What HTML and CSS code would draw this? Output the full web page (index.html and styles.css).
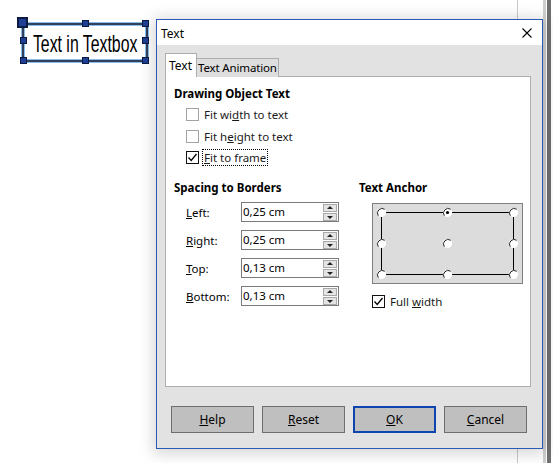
FILE: index.html
```html
<!DOCTYPE html>
<html>
<head>
<meta charset="utf-8">
<title>Text</title>
<link rel="stylesheet" href="styles.css">
</head>
<body>
<div class="desk">
  <div class="guide guide-a"></div>
  <div class="guide guide-b"></div>
  <div class="guide guide-c"></div>

  <div class="textbox">
    <div class="frame"><span class="tb-text">Text in Textbox</span></div>
    <span class="h h-big h-tl"></span>
    <span class="h h-tm"></span>
    <span class="h h-tr"></span>
    <span class="h h-ml"></span>
    <span class="h h-mr"></span>
    <span class="h h-bl"></span>
    <span class="h h-bm"></span>
    <span class="h h-br"></span>
  </div>

  <div class="dialog">
    <div class="titlebar">
      <span class="title">Text</span>
      <svg class="close" width="10" height="10" viewBox="0 0 10 10"><path d="M0.5 0.5 L9.5 9.5 M9.5 0.5 L0.5 9.5" stroke="#000" stroke-width="1.1" fill="none"/></svg>
    </div>
    <div class="dlg-body">
      <div class="tabs">
        <div class="tab tab-active">Text</div>
        <div class="tab">Text Animation</div>
      </div>
      <div class="panel">
        <div class="section">
          <div class="heading">Drawing Object Text</div>
          <div class="check">
            <span class="box box-off"></span>
            <span class="lbl-text">Fit wi<u>d</u>th to text</span>
          </div>
          <div class="check">
            <span class="box box-off"></span>
            <span class="lbl-text">Fit h<u>e</u>ight to text</span>
          </div>
          <div class="check">
            <span class="box box-on"><svg width="11" height="11" viewBox="0 0 11 11"><path d="M1.5 5.5 L4.2 8.5 L9.5 2" stroke="#000" stroke-width="1.3" fill="none"/></svg></span>
            <span class="lbl-text focus"><u>F</u>it to frame</span>
          </div>
        </div>

        <div class="cols">
          <div class="col-left">
            <div class="heading heading-2">Spacing to Borders</div>
            <div class="spin-row">
              <span class="lbl"><u>L</u>eft:</span>
              <div class="field"><span class="val">0,25 cm</span><span class="spin"><span class="sb sb-up"></span><span class="sb sb-down"></span></span></div>
            </div>
            <div class="spin-row">
              <span class="lbl"><u>R</u>ight:</span>
              <div class="field"><span class="val">0,25 cm</span><span class="spin"><span class="sb sb-up"></span><span class="sb sb-down"></span></span></div>
            </div>
            <div class="spin-row">
              <span class="lbl"><u>T</u>op:</span>
              <div class="field"><span class="val">0,13 cm</span><span class="spin"><span class="sb sb-up"></span><span class="sb sb-down"></span></span></div>
            </div>
            <div class="spin-row">
              <span class="lbl"><u>B</u>ottom:</span>
              <div class="field"><span class="val">0,13 cm</span><span class="spin"><span class="sb sb-up"></span><span class="sb sb-down"></span></span></div>
            </div>
          </div>

          <div class="col-right">
            <div class="heading heading-2">Text Anchor</div>
            <svg class="anchor" width="151" height="81" viewBox="0 0 151 81">
              <rect x="0.5" y="0.5" width="150" height="80" fill="#dcdcdc" stroke="#7f7f7f"/>
              <rect x="9.5" y="9.5" width="132" height="62" fill="none" stroke="#000"/>
              <g>
                <circle cx="9.5" cy="9.5" r="4.6" fill="#fff"/>
                <circle cx="75.5" cy="9.5" r="4.6" fill="#fff"/>
                <circle cx="141.5" cy="9.5" r="4.6" fill="#fff"/>
                <circle cx="9.5" cy="40.5" r="4.6" fill="#fff"/>
                <circle cx="75.5" cy="40.5" r="4.6" fill="#fff"/>
                <circle cx="141.5" cy="40.5" r="4.6" fill="#fff"/>
                <circle cx="9.5" cy="71.5" r="4.6" fill="#fff"/>
                <circle cx="75.5" cy="71.5" r="4.6" fill="#fff"/>
                <circle cx="141.5" cy="71.5" r="4.6" fill="#fff"/>
              </g>
              <g fill="none" stroke="#222" stroke-width="1">
                <path d="M6.3 12.7 A4.6 4.6 0 0 1 12.7 6.3"/>
                <path d="M72.3 12.7 A4.6 4.6 0 0 1 78.7 6.3"/>
                <path d="M138.3 12.7 A4.6 4.6 0 0 1 144.7 6.3"/>
                <path d="M6.3 43.7 A4.6 4.6 0 0 1 12.7 37.3"/>
                <path d="M72.3 43.7 A4.6 4.6 0 0 1 78.7 37.3"/>
                <path d="M138.3 43.7 A4.6 4.6 0 0 1 144.7 37.3"/>
                <path d="M6.3 74.7 A4.6 4.6 0 0 1 12.7 68.3"/>
                <path d="M72.3 74.7 A4.6 4.6 0 0 1 78.7 68.3"/>
                <path d="M138.3 74.7 A4.6 4.6 0 0 1 144.7 68.3"/>
              </g>
              <circle cx="75.5" cy="9.5" r="1.6" fill="#000"/>
            </svg>
            <div class="check check-full">
              <span class="box box-on"><svg width="11" height="11" viewBox="0 0 11 11"><path d="M1.5 5.5 L4.2 8.5 L9.5 2" stroke="#000" stroke-width="1.3" fill="none"/></svg></span>
              <span class="lbl-text">Full <u>w</u>idth</span>
            </div>
          </div>
        </div>
      </div>

      <div class="buttons">
        <div class="btn"><u>H</u>elp</div>
        <div class="btn"><u>R</u>eset</div>
        <div class="btn btn-default"><u>O</u>K</div>
        <div class="btn"><u>C</u>ancel</div>
      </div>
    </div>
  </div>
</div>
</body>
</html>
```

FILE: styles.css
```css
html, body {
  margin: 0;
  padding: 0;
}

body {
  width: 553px;
  height: 463px;
  overflow: hidden;
  background: #ffffff;
  font-family: "Noto Sans", "Open Sans", sans-serif;
  font-size: 11.5px;
  color: #000;
}

.desk {
  position: relative;
  width: 553px;
  height: 463px;
  overflow: hidden;
}

/* canvas guide lines */
.guide {
  position: absolute;
  top: 0;
  height: 463px;
}
.guide-a { left: 517px; width: 1px; background: #c9c9c9; }
.guide-b { left: 543px; width: 3px; background: #cfcfcf; }
.guide-c { left: 547px; width: 4px; background: #707070; }

/* text box drawing object on the canvas */
.textbox {
  position: absolute;
  left: 22px;
  top: 23px;
  width: 126px;
  height: 39px;
}
.frame {
  box-sizing: border-box;
  width: 100%;
  height: 100%;
  border: 2px solid #33405c;
  box-shadow: 0 0 0 1px #86c0ea, inset 0 0 0 1px #86c0ea;
  background: #fff;
  display: flex;
  align-items: center;
  justify-content: center;
  overflow: hidden;
}
.tb-text {
  font-family: "Liberation Sans", Arial, sans-serif;
  font-size: 24px;
  line-height: 24px;
  white-space: nowrap;
  transform: scaleX(0.66);
  margin-top: 2px;
}
.h {
  position: absolute;
  box-sizing: border-box;
  width: 7px;
  height: 7px;
  background: #1f3f95;
  border: 1px solid #0b1a40;
}
.h-big { width: 11px; height: 11px; left: -5px; top: -6px; border-width: 2px; border-color: #0b1a40; }
.h-tm { left: 60px; top: -3px; }
.h-tr { left: 120px; top: -3px; }
.h-ml { left: -2px; top: 14px; }
.h-mr { left: 120px; top: 14px; }
.h-bl { left: -2px; top: 34px; }
.h-bm { left: 60px; top: 34px; }
.h-br { left: 120px; top: 34px; }

/* dialog window */
.dialog {
  position: absolute;
  left: 156px;
  top: 19px;
  width: 387px;
  height: 430px;
  box-sizing: border-box;
  border: 1px solid #2a5ab4;
  background: #e2e2e2;
  box-shadow: 0 2px 14px 3px rgba(0, 0, 0, 0.16);
  display: flex;
  flex-direction: column;
}

.titlebar {
  height: 25px;
  background: #ffffff;
  display: flex;
  align-items: center;
  justify-content: space-between;
  padding: 0 10px 0 4px;
  flex: none;
}
.title {
  font-size: 12px;
  margin-top: 1px;
}
.close { display: block; margin-top: 1px; }

.dlg-body {
  flex: 1;
  padding: 8px 0 0 8px;
  display: flex;
  flex-direction: column;
}

.tabs {
  display: flex;
  align-items: flex-end;
  height: 24px;
  position: relative;
  z-index: 2;
  margin-bottom: -1px;
}
.tab {
  box-sizing: border-box;
  height: 19px;
  border: 1px solid #adadad;
  border-bottom: none;
  background: #dedede;
  padding: 0 1px 0 1px;
  line-height: 18px;
  white-space: nowrap;
  letter-spacing: -0.15px;
}
.tab + .tab { margin-left: -1px; }
.tab-active {
  height: 24px;
  background: #ffffff;
  padding: 0 4px 0 3px;
  line-height: 24px;
  font-size: 12px;
  letter-spacing: 0;
  position: relative;
  z-index: 2;
}

.panel {
  box-sizing: border-box;
  width: 366px;
  height: 311px;
  background: #ffffff;
  border: 1px solid #adadad;
  padding: 9px 0 0 8px;
  flex: none;
}

.heading {
  font-weight: bold;
  height: 16px;
  line-height: 16px;
  white-space: nowrap;
}

.section .heading { margin-bottom: 2px; }

.check {
  display: flex;
  align-items: center;
  height: 21.5px;
  padding-left: 12px;
  white-space: nowrap;
}
.box {
  box-sizing: border-box;
  width: 13px;
  height: 13px;
  background: #fff;
  border: 1px solid #a3a3a3;
  display: flex;
  align-items: center;
  justify-content: center;
  margin-right: 5px;
  flex: none;
}
.box-on { border-color: #111; }
.box svg { display: block; }
.lbl-text { color: #1a1a1a; line-height: 15px; }
.focus {
  outline: 1px dotted #000;
  outline-offset: 0px;
  padding: 0 1px;
  margin-left: -1px;
}

.cols {
  display: grid;
  grid-template-columns: 185px 1fr;
  margin-top: 11px;
}

.spin-row {
  display: flex;
  align-items: center;
  height: 20px;
  margin-top: 8px;
  padding-left: 12px;
}
.heading-2 + .spin-row { margin-top: 6.5px; }
.lbl {
  width: 55px;
  flex: none;
  white-space: nowrap;
}
.field {
  box-sizing: border-box;
  width: 98px;
  height: 20px;
  border: 1px solid #7a7a7a;
  background: #fff;
  display: flex;
  align-items: center;
  justify-content: space-between;
  padding: 0 1px 0 1px;
}
.val { line-height: 18px; white-space: nowrap; }
.spin {
  display: flex;
  flex-direction: column;
  gap: 1px;
  width: 14px;
}
.sb {
  box-sizing: border-box;
  height: 8px;
  background: #e4e4e4;
  border: 1px solid #a8a8a8;
  position: relative;
}
.sb::after {
  content: "";
  position: absolute;
  left: 3px;
  width: 0;
  height: 0;
  border-left: 3.5px solid transparent;
  border-right: 3.5px solid transparent;
}
.sb-up::after { top: 1px; border-bottom: 3.5px solid #222; }
.sb-down::after { top: 2px; border-top: 3.5px solid #222; }

.col-right .heading { margin-bottom: 7.5px; }
.anchor {
  display: block;
  margin-left: 13px;
}
.check-full {
  padding-left: 13px;
  height: 20px;
  margin-top: 7px;
}

.buttons {
  display: flex;
  gap: 8px;
  padding-left: 6px;
  margin-top: 19px;
}
.btn {
  box-sizing: border-box;
  width: 83px;
  height: 27px;
  background: #bfbfbf;
  border: 1px solid #6e6e6e;
  display: flex;
  align-items: center;
  justify-content: center;
  font-size: 12px;
}
.btn-default {
  border: 2px solid #0d44ae;
}
```
